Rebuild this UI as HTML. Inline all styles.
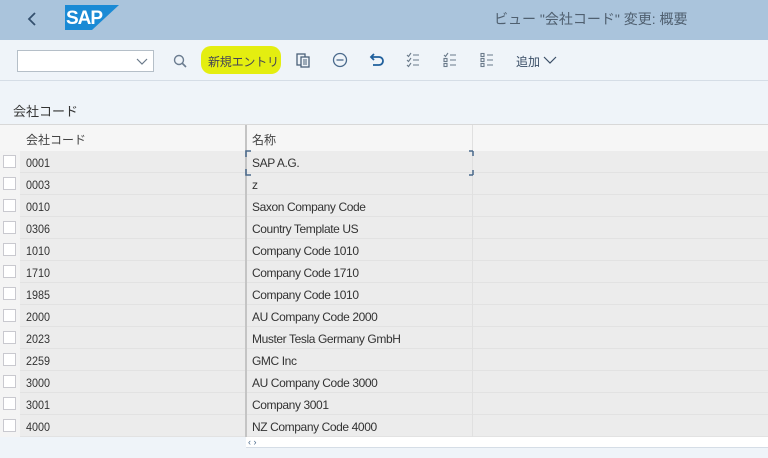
<!DOCTYPE html>
<html><head><meta charset="utf-8"><style>
*{margin:0;padding:0;box-sizing:border-box}
body{width:768px;height:458px;overflow:hidden;background:#eff4f9;font-family:"Liberation Sans","Noto Sans CJK JP",sans-serif;position:relative;color:#333}
.a{position:absolute}
.hdr{left:0;top:0;width:768px;height:40px;background:#aac4dc}
.tb{left:0;top:40px;width:768px;height:41px;background:#eff4f9;border-bottom:1px solid #d5dde6}
.row{position:absolute;left:0;width:768px;height:22px;background:#ececec;border-bottom:1px solid #e2e2e2;font-size:12px}
.row .cb{position:absolute;left:0;top:0;width:20px;height:22px;background:#f4f4f4}
.row .cb i{position:absolute;left:3px;top:4px;width:13px;height:13px;background:#fff;border:1px solid #c9c9cf}
.row .c1{position:absolute;left:26px;top:5px;color:#333;transform:scaleX(0.9);transform-origin:left}
.row .c2{position:absolute;left:252px;top:5px;letter-spacing:-0.4px;color:#333}
</style></head><body>
<div class="a hdr"></div>
<svg class="a" style="left:26px;top:11px" width="12" height="16"><path d="M9 2 L3 8 L9 14" stroke="#34506e" stroke-width="1.8" fill="none"/></svg>
<svg class="a" style="left:65px;top:5px" width="54" height="25"><polygon points="0,0 54,0 27,25 0,25" fill="#1a8ad5"/><text x="1" y="19" font-family="Liberation Sans" font-weight="bold" font-size="19" fill="#fff" letter-spacing="-1">SAP</text></svg>
<div class="a" style="left:494px;top:9px;font-size:14px;color:#506070">ビュー "会社コード" 変更: 概要</div>
<div class="a tb"></div>
<div class="a" style="left:17px;top:50px;width:137px;height:22px;background:#fff;border:1px solid #b5bfc8"></div>
<svg class="a" style="left:136px;top:56px" width="12" height="10"><path d="M1 3 L6 8 L11 3" stroke="#6a7a8a" stroke-width="1.2" fill="none"/></svg>
<svg class="a" style="left:172px;top:53px" width="16" height="16"><circle cx="7" cy="7" r="4.5" stroke="#6b7c90" stroke-width="1.4" fill="none"/><path d="M10 10 L14 14" stroke="#6b7c90" stroke-width="1.6"/></svg>
<div class="a" style="left:201px;top:46px;width:80px;height:28px;background:#e4ee10;border-radius:10px"></div>
<div class="a" style="left:208px;top:53px;font-size:12px;color:#445;letter-spacing:-0.2px">新規エントリ</div>
<svg class="a" style="left:295px;top:52px" width="16" height="16"><rect x="2" y="2" width="8" height="11" fill="none" stroke="#4a6078" stroke-width="1.3"/><rect x="6" y="5" width="8" height="10" fill="#eff4f9" stroke="#4a6078" stroke-width="1.3"/><path d="M8 8h4M8 10h4M8 12h4" stroke="#4a6078"/></svg>
<svg class="a" style="left:332px;top:52px" width="16" height="16"><circle cx="8" cy="8" r="6.5" stroke="#4a6a8c" stroke-width="1.3" fill="none"/><path d="M4.5 8h7" stroke="#4a6a8c" stroke-width="1.3"/></svg>
<svg class="a" style="left:369px;top:52px" width="16" height="16"><path d="M5 2 L2 5 L5 8 M2 5 H10 A4 4 0 0 1 10 13 H4" stroke="#1f5f9c" stroke-width="1.8" fill="none"/></svg>
<svg class="a" style="left:406px;top:52px" width="14" height="16"><g stroke="#6a7a8a" stroke-width="1.1" fill="none"><path d="M1 3l1.5 1.5L5 1M1 8l1.5 1.5L5 6M1 13l1.5 1.5L5 11"/><path d="M7 3h6M7 8h6M7 13h6"/></g></svg>
<svg class="a" style="left:443px;top:52px" width="14" height="16"><g stroke="#6a7a8a" stroke-width="1.1" fill="none"><path d="M1 3l1.5 1.5L5 1"/><rect x="1" y="6.5" width="3" height="3"/><rect x="1" y="11.5" width="3" height="3"/><path d="M7 3h6M7 8h6M7 13h6"/></g></svg>
<svg class="a" style="left:480px;top:52px" width="14" height="16"><g stroke="#6a7a8a" stroke-width="1.1" fill="none"><rect x="1" y="1.5" width="3" height="3"/><rect x="1" y="6.5" width="3" height="3"/><rect x="1" y="11.5" width="3" height="3"/><path d="M7 3h6M7 8h6M7 13h6"/></g></svg>
<div class="a" style="left:516px;top:53px;font-size:12px;color:#3a4e66">追加</div>
<svg class="a" style="left:543px;top:55px" width="14" height="10"><path d="M1 2 L7 8 L13 2" stroke="#3a4e66" stroke-width="1.2" fill="none"/></svg>
<div class="a" style="left:13px;top:101px;font-size:13px;color:#333">会社コード</div>
<div class="a" style="left:0;top:124px;width:768px;height:27px;background:#f6f6f6;border-top:1px solid #d8d8d8"></div>
<div class="a" style="left:26px;top:131px;font-size:12px;color:#444">会社コード</div>
<div class="a" style="left:252px;top:131px;font-size:12px;color:#444">名称</div>
<div class="row" style="top:151px"><div class="cb"><i></i></div><div class="c1">0001</div><div class="c2">SAP A.G.</div></div>
<div class="row" style="top:173px"><div class="cb"><i></i></div><div class="c1">0003</div><div class="c2">z</div></div>
<div class="row" style="top:195px"><div class="cb"><i></i></div><div class="c1">0010</div><div class="c2">Saxon Company Code</div></div>
<div class="row" style="top:217px"><div class="cb"><i></i></div><div class="c1">0306</div><div class="c2">Country Template US</div></div>
<div class="row" style="top:239px"><div class="cb"><i></i></div><div class="c1">1010</div><div class="c2">Company Code 1010</div></div>
<div class="row" style="top:261px"><div class="cb"><i></i></div><div class="c1">1710</div><div class="c2">Company Code 1710</div></div>
<div class="row" style="top:283px"><div class="cb"><i></i></div><div class="c1">1985</div><div class="c2">Company Code 1010</div></div>
<div class="row" style="top:305px"><div class="cb"><i></i></div><div class="c1">2000</div><div class="c2">AU Company Code 2000</div></div>
<div class="row" style="top:327px"><div class="cb"><i></i></div><div class="c1">2023</div><div class="c2">Muster Tesla Germany GmbH</div></div>
<div class="row" style="top:349px"><div class="cb"><i></i></div><div class="c1">2259</div><div class="c2">GMC Inc</div></div>
<div class="row" style="top:371px"><div class="cb"><i></i></div><div class="c1">3000</div><div class="c2">AU Company Code 3000</div></div>
<div class="row" style="top:393px"><div class="cb"><i></i></div><div class="c1">3001</div><div class="c2">Company 3001</div></div>
<div class="row" style="top:415px"><div class="cb"><i></i></div><div class="c1">4000</div><div class="c2">NZ Company Code 4000</div></div>
<div class="a" style="left:472px;top:125px;width:1px;height:312px;background:#e0e0e0"></div>
<div class="a" style="left:245px;top:125px;width:2px;height:312px;background:#c4c4c4"></div>
<svg class="a" style="left:244px;top:149px" width="232" height="28"><path d="M2 8V2H7M2 20V26H7M229 2H225M229 2V7M229 26H225M229 26V21" stroke="#4a6a8c" stroke-width="1.5" fill="none"/></svg>
<div class="a" style="left:0;top:437px;width:768px;height:11px;background:#fff;border-bottom:1px solid #d5dde6"></div>
<div class="a" style="left:0;top:437px;width:246px;height:11px;background:#eff4f9"></div>
<div class="a" style="left:248px;top:437px;font-size:9px;color:#4a6a8c">‹ ›</div>
</body></html>
